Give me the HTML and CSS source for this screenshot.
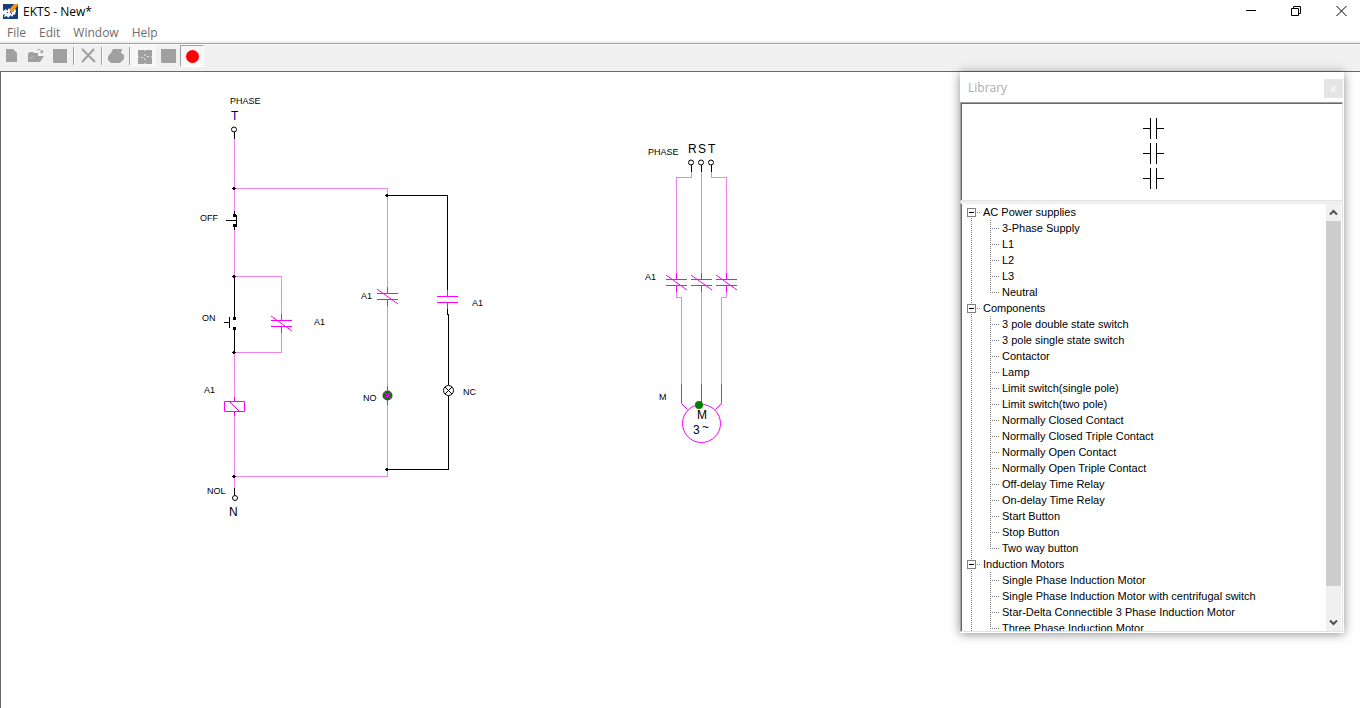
FILE: index.html
```
<!DOCTYPE html>
<html lang="en">
<head>
  <meta charset="UTF-8" />
  <meta name="viewport" content="width=device-width, initial-scale=1" />
  <title>EKTS - New*</title>
  <link rel="stylesheet" href="styles.css">
</head>
<body>
  <header class="titlebar">
    <svg class="app-icon" width="15" height="15" viewBox="0 0 15 15">
      <rect width="15" height="15" fill="#123f7c" />
      <path d="M6 6L11 0H15V1L9 9Z" fill="#f7941d" />
      <path d="M0 7L3 5L4 7L6 4L7 6L7 9L10 8L12 5L13 6L12 11L11 10L9 13L8 11L5 14L4 12L1 13L2 10L0 11Z" fill="#fff" />
      <path d="M4 9L5 8M8 10L9 9" stroke="#123f7c" />
    </svg>
    <h1>EKTS - New*</h1>
    <div class="window-controls">
      <button aria-label="Minimize">
        <svg width="11" height="11"><path d="M0 4.5H10" stroke="#000" /></svg>
      </button>
      <button aria-label="Restore">
        <svg width="11" height="11" fill="none" stroke="#000"><path d="M0.5 2.5H7.5V9.5H0.5ZM2.5 2.5V0.5H9.5V7.5H7.5" /></svg>
      </button>
      <button aria-label="Close">
        <svg width="11" height="11"><path d="M0.5 0L10.5 10M10.5 0L0.5 10" stroke="#000" /></svg>
      </button>
    </div>
  </header>

  <nav class="menubar">
    <button>File</button>
    <button>Edit</button>
    <button>Window</button>
    <button>Help</button>
  </nav>

  <div class="toolbar">
    <button aria-label="New">
      <svg width="16" height="16"><path d="M2 1H9L13 5V14H2Z" /></svg>
    </button>
    <button aria-label="Open">
      <svg width="16" height="16"><path d="M0 5H1L2 4H5L6 5H10V8H16L12 14H0Z" /><path d="M9 2.5L10 1.5H12L14.5 4.5M14.5 2V5M12 4.5H15" fill="none" stroke="#a0a0a0" /><path d="M2 11L5 8" stroke="#c8c8c8" /></svg>
    </button>
    <button aria-label="Save">
      <svg width="16" height="16"><path d="M1 1H15V15H2L1 14Z" /></svg>
    </button>
    <span class="separator"></span>
    <button aria-label="Delete">
      <svg width="16" height="16"><path d="M2 1L15 14M14 1L2 14" fill="none" stroke="#a0a0a0" stroke-width="2" /></svg>
    </button>
    <span class="separator"></span>
    <button aria-label="Print">
      <svg width="16" height="16"><path d="M5 1H14L13 5L16 7V11L12 15H3L0 12V8L3 5Z" /></svg>
    </button>
    <span class="separator"></span>
    <button aria-label="Snap to grid" class="hatched">
      <svg width="16" height="16"><path d="M2 2H8L9 3L10 2H16V8L15 9L16 10V16H10L9 15L8 16H2V10L3 9L2 8Z" /><path d="M9 6V8M9 10V12M5 9.5H7M11 8.5H13" stroke="#eee" /></svg>
    </button>
    <button aria-label="Wire">
      <svg width="16" height="16"><path d="M1 1H16V15H2L1 14Z" /></svg>
    </button>
    <button aria-label="Stop simulation" class="hatched pressed">
      <svg width="16" height="16"><circle cx="8.5" cy="8.5" r="6.5" fill="#f00" /></svg>
    </button>
  </div>

  <main class="workspace">
    <svg class="circuit" width="760" height="460" viewBox="1 72 760 460">
      <defs>
        <g id="closed-contact">
          <path d="M-10.5 -3H10.5M-10.5 3H10.5M0 -9.5V-3M0 3V9.5M-10.5 -7.5L10.5 7.5" />
        </g>
        <g id="open-contact">
          <path d="M-10.5 -3H10.5M-10.5 3H10.5M0 -9.5V-3M0 3V9.5" />
        </g>
        <path id="node" d="M-2 0H2M-1 -1H1M-1 1H1" />
      </defs>

      <!-- control circuit wires -->
      <g class="wire">
        <path d="M234.5 139V211M234.5 188.5H387.5V287M234.5 230V276.5H281.5V314" />
        <path d="M281.5 333V352.5H234.5V397M234.5 416V488M234.5 476.5H387.5V405M387.5 306V386" />
      </g>
      <g class="black">
        <path d="M387.5 195.5H447.5V290M447.5 309V314.5H448.5V385M448.5 396V469.5H387.5" />
        <path d="M234.5 276V317M234.5 330V352M234.5 132V139M234.5 488V495" />
        <!-- stop button -->
        <path d="M234.5 211V215M234.5 226V230M236.5 215V227M226 220.5H237" />
        <path d="M233 215.5H236M233 225.5H236" stroke-width="3" />
        <!-- start button -->
        <path d="M229.5 317V328M224 322.5H229" />
        <path d="M233 318.5H236M233 328.5H236" stroke-width="3" />
        <use href="#node" x="234" y="188.5" />
        <use href="#node" x="387" y="195.5" />
        <use href="#node" x="234" y="276.5" />
        <use href="#node" x="234" y="352.5" />
        <use href="#node" x="234" y="476.5" />
        <use href="#node" x="387" y="469.5" />
      </g>
      <g class="terminal">
        <circle cx="234" cy="129.5" r="2.5" />
        <circle cx="235" cy="498" r="2.5" />
        <circle cx="448.5" cy="390.5" r="5" />
        <path d="M445 387L452 394M452 387L445 394" />
      </g>
      <g class="part">
        <use href="#closed-contact" x="281.5" y="323.5" />
        <use href="#closed-contact" x="387.5" y="296.5" />
        <use href="#open-contact" x="447.5" y="299.5" />
        <path d="M224.5 401.5H244.5V411.5H224.5ZM230 402L239 411M234.5 397V401M234.5 412V416" />
        <circle class="lamp" cx="387.5" cy="395.5" r="5" />
        <path d="M384.5 392.5L390.5 398.5M390.5 392.5L384.5 398.5M387.5 386V391M387.5 400V405" />
      </g>

      <!-- motor circuit -->
      <g class="wire">
        <path d="M691.5 172V177.5H676.5V273M701.5 172V273M711.5 172V177.5H726.5V273" />
        <path d="M676.5 292V297.5H681.5V384M701.5 292V384M726.5 292V297.5H721.5V384" />
      </g>
      <path class="black" d="M691.5 165V172M701.5 165V172M711.5 165V172" />
      <g class="terminal">
        <circle cx="691" cy="162.5" r="2.5" />
        <circle cx="701" cy="162.5" r="2.5" />
        <circle cx="711" cy="162.5" r="2.5" />
      </g>
      <g class="part">
        <use href="#closed-contact" x="676.5" y="282.5" />
        <use href="#closed-contact" x="701.5" y="282.5" />
        <use href="#closed-contact" x="726.5" y="282.5" />
        <path d="M681.5 384V403.5L687.5 409.5M701.5 384V404M721.5 384V403.5L715.5 409.5" />
        <circle cx="701.5" cy="423.5" r="19" />
      </g>
      <circle cx="699" cy="405" r="4" fill="#008000" />

      <g class="label">
        <text x="230" y="104">PHASE</text>
        <text x="200" y="221">OFF</text>
        <text x="202" y="321">ON</text>
        <text x="314" y="325">A1</text>
        <text x="204" y="393">A1</text>
        <text x="361" y="299">A1</text>
        <text x="472" y="306">A1</text>
        <text x="363" y="401">NO</text>
        <text x="463" y="395">NC</text>
        <text x="207" y="494">NOL</text>
        <text x="648" y="155">PHASE</text>
        <text x="645" y="280">A1</text>
        <text x="659" y="400">M</text>
      </g>
      <g class="pin">
        <text x="231" y="120" fill="#000080">T</text>
        <text x="229" y="516">N</text>
        <text x="688" y="153">R</text>
        <text x="698" y="153">S</text>
        <text x="708" y="153">T</text>
        <text x="697" y="419">M</text>
        <text x="693" y="434">3</text>
        <text x="702" y="431">~</text>
      </g>
    </svg>

    <aside class="library">
      <div class="library-title">
        <h2>Library</h2>
        <button aria-label="Close library">x</button>
      </div>
      <div class="preview">
        <svg width="21" height="71" stroke="#000">
          <path d="M7.5 0V21M13.5 0V21M0 10.5H7M14 10.5H21" />
          <path d="M7.5 25V46M13.5 25V46M0 35.5H7M14 35.5H21" />
          <path d="M7.5 50V71M13.5 50V71M0 60.5H7M14 60.5H21" />
        </svg>
      </div>
      <div class="tree-box">
        <ul class="tree">
          <li>
            <button class="toggle" aria-label="Collapse AC Power supplies"></button><span>AC Power supplies</span>
            <ul>
              <li>3-Phase Supply</li>
              <li>L1</li>
              <li>L2</li>
              <li>L3</li>
              <li>Neutral</li>
            </ul>
          </li>
          <li>
            <button class="toggle" aria-label="Collapse Components"></button><span>Components</span>
            <ul>
              <li>3 pole double state switch</li>
              <li>3 pole single state switch</li>
              <li>Contactor</li>
              <li>Lamp</li>
              <li>Limit switch(single pole)</li>
              <li>Limit switch(two pole)</li>
              <li>Normally Closed Contact</li>
              <li>Normally Closed Triple Contact</li>
              <li>Normally Open Contact</li>
              <li>Normally Open Triple Contact</li>
              <li>Off-delay Time Relay</li>
              <li>On-delay Time Relay</li>
              <li>Start Button</li>
              <li>Stop Button</li>
              <li>Two way button</li>
            </ul>
          </li>
          <li>
            <button class="toggle" aria-label="Collapse Induction Motors"></button><span>Induction Motors</span>
            <ul>
              <li>Single Phase Induction Motor</li>
              <li>Single Phase Induction Motor with centrifugal switch</li>
              <li>Star-Delta Connectible 3 Phase Induction Motor</li>
              <li>Three Phase Induction Motor</li>
            </ul>
          </li>
        </ul>
        <div class="scrollbar">
          <button aria-label="Scroll up">
            <svg width="9" height="7"><path d="M1 5.5L4.5 2L8 5.5" /></svg>
          </button>
          <div class="thumb"></div>
          <button aria-label="Scroll down">
            <svg width="9" height="7"><path d="M1 1.5L4.5 5L8 1.5" /></svg>
          </button>
        </div>
      </div>
    </aside>
  </main>
</body>
</html>
```
FILE: styles.css
```
* {
  box-sizing: border-box;
}

body {
  font-family: "Open Sans", "Noto Sans", sans-serif;
  font-size: 12px;
  margin: 0;
  height: 100vh;
  display: flex;
  flex-direction: column;
  overflow: hidden;
  background-color: #fff;
  color: #000;
}

button {
  font: inherit;
  color: inherit;
  margin: 0;
  padding: 0;
  border: none;
  background: none;
}

h1, h2 {
  font-size: 12px;
  font-weight: normal;
  margin: 0;
}

svg {
  display: block;
  flex: none;
}

.titlebar {
  display: flex;
  align-items: center;
  height: 23px;
  padding-left: 3px;
}

.titlebar h1 {
  flex: 1;
  padding-left: 5px;
}

.window-controls {
  display: flex;
  gap: 7px;
}

.window-controls button {
  width: 38px;
  height: 21px;
  display: flex;
  align-items: center;
  justify-content: center;
}

.menubar {
  display: flex;
  gap: 13px;
  height: 18px;
  padding-left: 7px;
  color: #6d6d6d;
}

.menubar button {
  line-height: 20px;
}

.toolbar {
  display: flex;
  align-items: flex-start;
  height: 30px;
  border-top: 2px solid #f0f0f0;
  background-color: #f0f0f0;
  box-shadow: inset 0 1px #a0a0a0, inset 0 2px #fff;
  padding-top: 2px;
}

.toolbar button {
  width: 24px;
  height: 22px;
  display: flex;
  align-items: center;
  justify-content: center;
}

.toolbar svg {
  fill: #a0a0a0;
}

.toolbar .hatched {
  background: repeating-conic-gradient(#fff 0 25%, #f0f0f0 0 50%) 0 0 / 2px 2px content-box;
}

.toolbar .pressed {
  border: 1px solid #fff;
  border-top-color: #a0a0a0;
  border-left-color: #a0a0a0;
}

.separator {
  width: 2px;
  height: 18px;
  margin: 2px 1px;
  border-left: 1px solid #a0a0a0;
  border-right: 1px solid #fff;
}

.workspace {
  flex: 1;
  min-height: 0;
  position: relative;
  border-top: 1px solid #696969;
  border-left: 1px solid #696969;
}

.circuit {
  fill: none;
  font-family: "Liberation Sans", Arial, sans-serif;
}

.wire {
  stroke: #ee82ee;
  shape-rendering: crispEdges;
}

.black {
  stroke: #000;
  shape-rendering: crispEdges;
}

.part {
  stroke: #f0f;
}

.terminal {
  stroke: #000;
}

.terminal circle {
  fill: #fff;
}

.lamp {
  fill: #008000;
  stroke: none;
}

.label {
  fill: #000;
  font-size: 9px;
}

.pin {
  fill: #000;
  font-size: 12px;
}

.library {
  position: absolute;
  top: 0;
  right: 16px;
  width: 384px;
  height: 561px;
  display: flex;
  flex-direction: column;
  padding-right: 1px;
  background-color: #fff;
  box-shadow: 0 1px 10px rgba(0, 0, 0, 0.45);
}

.library-title {
  display: flex;
  align-items: center;
  justify-content: space-between;
  height: 30px;
  padding-left: 8px;
  color: #aaa;
}

.library-title button {
  width: 19px;
  height: 19px;
  margin-top: 3px;
  font-size: 10px;
  font-weight: bold;
  line-height: 17px;
  background-color: #e5e5e5;
  color: #f7f7f7;
}

.preview {
  display: flex;
  justify-content: center;
  height: 99px;
  padding-top: 15px;
  padding-left: 4px;
  border: 1px solid #e3e3e3;
  border-top-color: #a0a0a0;
  border-left-color: #a0a0a0;
  box-shadow: inset 1px 1px #696969;
}

.tree-box {
  flex: 1;
  min-height: 0;
  display: flex;
  padding-right: 1px;
  border: 1px solid #e3e3e3;
  border-top: 3px solid #f0f0f0;
  border-left-color: #a0a0a0;
  box-shadow: inset 1px 0 #696969;
  margin-bottom: 1px;
}

.tree {
  flex: 1;
  overflow: hidden;
  font-family: "Liberation Sans", Arial, sans-serif;
  font-size: 11px;
  line-height: 16px;
}

.tree, .tree ul {
  list-style: none;
  margin: 0;
  padding: 0;
}

/* dotted guide lines */
.tree > li {
  padding-left: 6px;
  background: repeating-linear-gradient(#808080 0 1px, transparent 1px 2px) 10px 0 / 1px 100% no-repeat;
}

.tree > li:first-child {
  background-position: 10px 8px;
}

.tree > li > span {
  padding-left: 7px;
  background: repeating-linear-gradient(to right, #808080 0 1px, transparent 1px 2px) 1px 50% / 4px 1px no-repeat;
}

.tree ul {
  padding-left: 23px;
}

.tree ul li {
  padding-left: 12px;
  white-space: nowrap;
  background:
    repeating-linear-gradient(#808080 0 1px, transparent 1px 2px) 0 0 / 1px 100% no-repeat,
    repeating-linear-gradient(to right, #808080 0 1px, transparent 1px 2px) 0 8px / 10px 1px no-repeat;
}

.tree ul li:last-child {
  background-size: 1px 8px, 10px 1px;
}

.toggle {
  width: 9px;
  height: 9px;
  margin-top: 4px;
  vertical-align: top;
  border: 1px solid #808080;
  background: linear-gradient(#000, #000) center / 5px 1px no-repeat #fff;
}

.scrollbar {
  width: 15px;
  display: flex;
  flex-direction: column;
  background-color: #f0f0f0;
}

.scrollbar button {
  height: 17px;
  display: flex;
  align-items: center;
  justify-content: center;
}

.scrollbar path {
  fill: none;
  stroke: #505050;
  stroke-width: 2;
}

.thumb {
  height: 365px;
  margin-bottom: auto;
  background-color: #cdcdcd;
}
```
